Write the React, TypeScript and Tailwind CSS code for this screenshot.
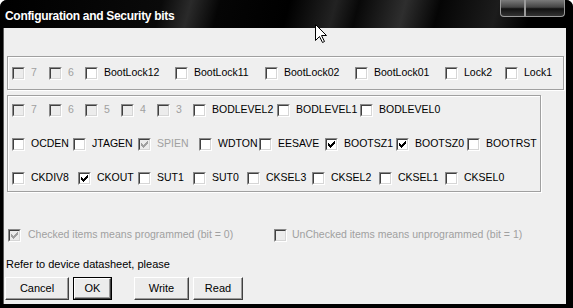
import React from 'react';

type Bit = { label: string; w: string; checked?: boolean; disabled?: boolean };

const row0: Bit[] = [
    { label: '7', w: 'w-[37px]', disabled: true },
    { label: '6', w: 'w-[36px]', disabled: true },
    { label: 'BootLock12', w: 'w-[90px]' },
    { label: 'BootLock11', w: 'w-[90px]' },
    { label: 'BootLock02', w: 'w-[90px]' },
    { label: 'BootLock01', w: 'w-[90px]' },
    { label: 'Lock2', w: 'w-[60px]' },
    { label: 'Lock1', w: 'w-[50px]' },
];

const row1: Bit[] = [
    { label: '7', w: 'w-[37px]', disabled: true },
    { label: '6', w: 'w-[36px]', disabled: true },
    { label: '5', w: 'w-[36px]', disabled: true },
    { label: '4', w: 'w-[36px]', disabled: true },
    { label: '3', w: 'w-[36px]', disabled: true },
    { label: 'BODLEVEL2', w: 'w-[84px]' },
    { label: 'BODLEVEL1', w: 'w-[83px]' },
    { label: 'BODLEVEL0', w: 'w-[90px]' },
];

const row2: Bit[] = [
    { label: 'OCDEN', w: 'w-[61px]' },
    { label: 'JTAGEN', w: 'w-[65px]' },
    { label: 'SPIEN', w: 'w-[61px]', checked: true, disabled: true },
    { label: 'WDTON', w: 'w-[60px]' },
    { label: 'EESAVE', w: 'w-[66px]' },
    { label: 'BOOTSZ1', w: 'w-[71px]', checked: true },
    { label: 'BOOTSZ0', w: 'w-[71px]', checked: true },
    { label: 'BOOTRST', w: 'w-[70px]' },
];

const row3: Bit[] = [
    { label: 'CKDIV8', w: 'w-[66px]' },
    { label: 'CKOUT', w: 'w-[60px]', checked: true },
    { label: 'SUT1', w: 'w-[55px]' },
    { label: 'SUT0', w: 'w-[54px]' },
    { label: 'CKSEL3', w: 'w-[65px]' },
    { label: 'CKSEL2', w: 'w-[67px]' },
    { label: 'CKSEL1', w: 'w-[66px]' },
    { label: 'CKSEL0', w: 'w-[60px]' },
];

// classic 7x7 check glyph
const Tick = ({ color }: { color: string }) => (
    <svg width="7" height="7" viewBox="0 0 7 7" shapeRendering="crispEdges">
        <path fill={color} d="M0 2h1v3H0zM1 3h1v3H1zM2 4h1v3H2zM3 3h1v3H3zM4 2h1v3H4zM5 1h1v3H5zM6 0h1v3H6z" />
    </svg>
);

const Box = ({ checked, disabled }: { checked?: boolean; disabled?: boolean }) => (
    <span className="box-border flex h-[13px] w-[13px] shrink-0 border border-t-[#8a8a8a] border-l-[#8a8a8a] border-b-white border-r-white">
        <span
            className={`box-border flex flex-1 items-center justify-center border border-t-[#404040] border-l-[#404040] border-b-[#d6d6d6] border-r-[#d6d6d6] ${
                disabled ? 'bg-[#ececec]' : 'bg-white'
            }`}
        >
            {checked && <Tick color={disabled ? '#a0a0a0' : '#000'} />}
        </span>
    </span>
);

const Item = ({ bit }: { bit: Bit }) => (
    <div className={`flex shrink-0 items-center gap-[6px] overflow-hidden whitespace-nowrap ${bit.w}`}>
        <Box checked={bit.checked} disabled={bit.disabled} />
        <span className={bit.disabled ? 'text-[#a0a0a0]' : 'text-black'}>{bit.label}</span>
    </div>
);

const Row = ({ bits }: { bits: Bit[] }) => (
    <div className="flex h-[16px] items-center">
        {bits.map((b, i) => (
            <Item key={i} bit={b} />
        ))}
    </div>
);

const Button = ({ label, isDefault, w }: { label: string; isDefault?: boolean; w: string }) => (
    <div className={`box-border h-[23px] shrink-0 ${w} ${isDefault ? 'border border-black' : ''}`}>
        <div className="box-border flex h-full w-full items-center justify-center border border-t-white border-l-white border-b-[#404040] border-r-[#404040] bg-[#ececec] shadow-[inset_-1px_-1px_0_#9a9a9a]">
            {label}
        </div>
    </div>
);

export default function App() {
    return (
        <div className="relative flex h-[308px] w-[573px] flex-col overflow-hidden rounded-t-[7px] bg-black font-['Liberation_Sans',Arial,sans-serif] text-[10.5px] text-black">
            {/* Title bar */}
            <div className="flex h-[28px] shrink-0 items-start bg-[linear-gradient(105deg,#000_0%,#0a0a0a_28%,#2a2a2a_33%,#050505_38%,#000_50%,#222_58%,#080808_62%,#2e2e2e_70%,#050505_76%,#1c1c1c_86%,#000_92%)]">
                <span className="ml-[5px] mt-[9px] text-[12px] font-bold leading-[14px] tracking-[-0.3px] text-white">
                    Configuration and Security bits
                </span>
                <div className="ml-auto mr-[8px] flex h-[17px]">
                    <div className="box-border h-full w-[25px] rounded-bl-[4px] border border-t-0 border-[#9a9a9a] bg-[linear-gradient(#7a7a7a,#444_45%,#111_55%,#333)]" />
                    <div className="box-border h-full w-[40px] rounded-br-[4px] border border-t-0 border-[#9a9a9a] bg-[linear-gradient(#7a7a7a,#444_45%,#111_55%,#333)]" />
                </div>
            </div>

            {/* Client area */}
            <div className="mb-[4px] ml-[3px] mr-[7px] flex flex-1 flex-col border-l border-[#5a5a5a] bg-[#efefef]">
                {/* Lock bits group */}
                <div className="ml-[3px] mr-[2px] mt-[28px] box-border flex h-[34px] items-center border border-[#a0a0a0] pl-[4px] shadow-[inset_1px_1px_0_#fff,1px_1px_0_#fff]">
                    <Row bits={row0} />
                </div>

                {/* Fuse bits group */}
                <div className="ml-[3px] mt-[5px] box-border flex h-[97px] w-[534px] flex-col gap-[18px] border border-[#a0a0a0] pl-[4px] pt-[6px] shadow-[inset_1px_1px_0_#fff,1px_1px_0_#fff]">
                    <Row bits={row1} />
                    <Row bits={row2} />
                    <Row bits={row3} />
                </div>

                {/* Legend */}
                <div className="ml-[4px] mt-[35px] flex h-[16px] items-center text-[#a0a0a0]">
                    <div className="flex w-[266px] items-center gap-[7px]">
                        <Box checked disabled />
                        <span>Checked items means programmed (bit = 0)</span>
                    </div>
                    <div className="flex items-center gap-[5px]">
                        <Box disabled />
                        <span>UnChecked items means unprogrammed (bit = 1)</span>
                    </div>
                </div>

                <div className="ml-[2px] mt-[13px] h-[16px] text-[11px] leading-[16px]">Refer to device datasheet, please</div>

                {/* Buttons */}
                <div className="ml-[1px] mt-[5px] flex text-[11px]">
                    <Button label="Cancel" w="w-[64px]" />
                    <div className="ml-[4px]">
                        <Button label="OK" isDefault w="w-[39px]" />
                    </div>
                    <div className="ml-[22px]">
                        <Button label="Write" w="w-[55px]" />
                    </div>
                    <div className="ml-[4px]">
                        <Button label="Read" w="w-[50px]" />
                    </div>
                </div>
            </div>

            {/* Mouse pointer */}
            <svg className="absolute left-[315px] top-[24px]" width="13" height="20" viewBox="0 0 13 20">
                <path d="M0.5 0.5V16.5L4.5 12.5L7.5 18.5L9.5 17.5L6.5 11.5H11.5Z" fill="#fff" stroke="#000" strokeWidth="1" />
            </svg>
        </div>
    );
}
